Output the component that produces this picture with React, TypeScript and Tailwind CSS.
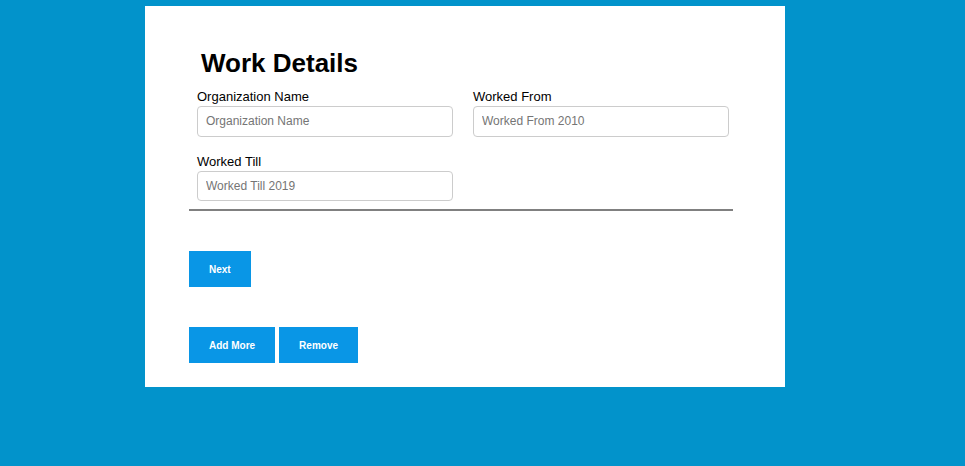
import React from "react";

export default function App() {
  const font = { fontFamily: '"Liberation Sans", Arial, sans-serif' };
  return (
    <div className="w-[965px] h-[466px] bg-[#0293cb] overflow-hidden" style={font}>
      <div className="ml-[145px] mt-[6px] w-[640px] bg-white px-[44px] pt-[42px] pb-[24px]">
        <h1 className="ml-[12px] text-[26px] leading-[30px] font-bold text-black">Work Details</h1>
        <div className="mt-[11px] pl-[8px] grid grid-cols-[256px_256px] gap-x-[20px]">
          <div>
            <label className="block text-[13px] leading-[15px] text-black">Organization Name</label>
            <input
              className="mt-[2px] block w-[256px] h-[31px] border border-[#cccccc] rounded-[4px] px-2 pb-[2px] text-[12px] text-[#333] placeholder:text-[#757575] outline-none"
              placeholder="Organization Name"
            />
          </div>
          <div>
            <label className="block text-[13px] leading-[15px] text-black">Worked From</label>
            <input
              className="mt-[2px] block w-[256px] h-[31px] border border-[#cccccc] rounded-[4px] px-2 pb-[2px] text-[12px] text-[#333] placeholder:text-[#757575] outline-none"
              placeholder="Worked From 2010"
            />
          </div>
          <div className="mt-[17px]">
            <label className="block text-[13px] leading-[15px] text-black">Worked Till</label>
            <input
              className="mt-[2px] block w-[256px] h-[30px] border border-[#cccccc] rounded-[4px] px-2 pb-[1px] text-[12px] text-[#333] placeholder:text-[#757575] outline-none"
              placeholder="Worked Till 2019"
            />
          </div>
        </div>
        <div className="mt-[8px] w-[544px] border-t-2 border-[#808080]" />
        <div className="mt-[40px]">
          <button className="h-[36px] px-5 bg-[#0996e6] text-white text-[10px] font-bold">Next</button>
        </div>
        <div className="mt-[40px] flex gap-1">
          <button className="h-[36px] px-5 bg-[#0996e6] text-white text-[10px] font-bold">Add More</button>
          <button className="h-[36px] px-5 bg-[#0996e6] text-white text-[10px] font-bold">Remove</button>
        </div>
      </div>
    </div>
  );
}
